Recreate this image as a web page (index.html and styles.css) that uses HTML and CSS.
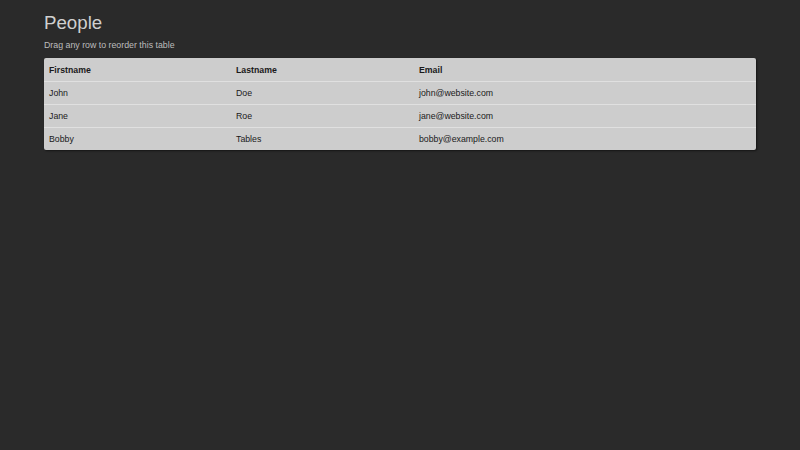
FILE: index.html
```html
<!DOCTYPE html>
<html>
<head>
<meta charset="utf-8">
<link rel="stylesheet" href="styles.css">
</head>
<body>
<main class="page">
  <h1 class="title">People</h1>
  <p class="hint">Drag any row to reorder this table</p>
  <table class="people">
    <thead>
      <tr><th class="c1">Firstname</th><th class="c2">Lastname</th><th>Email</th></tr>
    </thead>
    <tbody>
      <tr><td>John</td><td>Doe</td><td>john@website.com</td></tr>
      <tr><td>Jane</td><td>Roe</td><td>jane@website.com</td></tr>
      <tr><td>Bobby</td><td>Tables</td><td>bobby@example.com</td></tr>
    </tbody>
  </table>
</main>
</body>
</html>
```

FILE: styles.css
```css
html, body {
  margin: 0;
  padding: 0;
  background: #2a2a2a;
  font-family: "Liberation Sans", Arial, sans-serif;
}
.page {
  padding: 11px 44px;
}
.title {
  margin: 0;
  font-size: 18.7px;
  font-weight: normal;
  color: #d0d0d0;
  line-height: 24px;
}
.hint {
  margin: 4px 0 7px;
  font-size: 8.8px;
  line-height: 12px;
  color: #bdbdbd;
}
.people {
  width: 100%;
  border-collapse: separate;
  border-spacing: 0;
  background: #cdcdcd;
  border-radius: 2px;
  box-shadow: 1px 1px 2px rgba(0,0,0,0.5);
  font-size: 8.75px;
  color: #1a1a1a;
}
.people th, .people td {
  text-align: left;
  padding: 5px 5px;
  line-height: 12px;
}
.people th { font-weight: bold; padding-top: 6px; }
.people td { border-top: 1px solid #e0e0e0; }
.people .c1 { width: 177px; }
.people .c2 { width: 173px; }
```
